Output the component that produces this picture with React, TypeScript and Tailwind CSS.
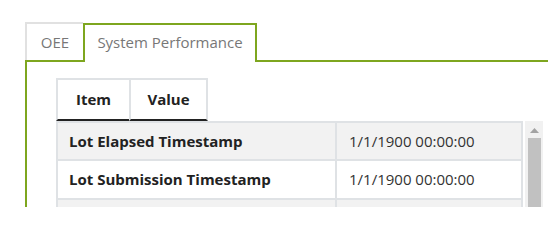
import React from "react";

const font = { fontFamily: '"Open Sans", "Noto Sans", sans-serif' };

export default function App() {
  return (
    <div className="w-[548px] h-[207px] overflow-hidden bg-white pt-[21px] pl-[25px]" style={font}>
      <div className="flex items-end h-[39px]">
        <div className="h-[38px] w-[58px] border-t-2 border-l-2 border-[#e1e1e1] flex items-center justify-center text-[15px] text-[#777777]">
          OEE
        </div>
        <div className="relative z-10 h-[39px] w-[174px] border-t-2 border-l-2 border-r-2 border-[#7ea61f] bg-white flex items-center justify-center text-[15px] text-[#777777] -mb-[2px] pb-[2px]">
          System Performance
        </div>
      </div>
      <div className="border-t-2 border-l-2 border-[#7ea61f] pl-[29px] pt-[16px] h-[200px]">
        <div className="flex">
          <div className="w-[73px] h-[43px] border-t-2 border-l-2 border-[#dfe2e5] border-b-2 border-b-[#222222] flex items-center justify-center font-bold text-[15px] text-[#222222]">
            Item
          </div>
          <div className="w-[79px] h-[43px] border-t-2 border-l-2 border-r-2 border-[#dfe2e5] border-b-2 border-b-[#222222] flex items-center justify-center font-bold text-[15px] text-[#222222]">
            Value
          </div>
        </div>
        <div className="flex w-[487px]">
          <div className="w-[467px] border-l-2 border-t-2 border-[#dfe2e5]">
            <div className="flex h-[38px] bg-[#f2f2f2] border-b-2 border-[#dfe2e5]">
              <div className="w-[279px] border-r-2 border-[#dfe2e5] flex items-center pl-[11px] font-bold text-[15px] text-[#222222]">
                Lot Elapsed Timestamp
              </div>
              <div className="flex-1 border-r-2 border-[#dfe2e5] flex items-center pl-[12px] text-[15px] text-[#333333]">
                1/1/1900 00:00:00
              </div>
            </div>
            <div className="flex h-[39px] bg-white border-b-2 border-[#dfe2e5]">
              <div className="w-[279px] border-r-2 border-[#dfe2e5] flex items-center pl-[11px] font-bold text-[15px] text-[#222222]">
                Lot Submission Timestamp
              </div>
              <div className="flex-1 border-r-2 border-[#dfe2e5] flex items-center pl-[12px] text-[15px] text-[#333333]">
                1/1/1900 00:00:00
              </div>
            </div>
            <div className="flex h-[39px] bg-[#f2f2f2]">
              <div className="w-[279px] border-r-2 border-[#dfe2e5]"></div>
              <div className="flex-1 border-r-2 border-[#dfe2e5]"></div>
            </div>
          </div>
          <div className="ml-[2px] w-[18px] bg-[#f1f1f1] flex flex-col items-center">
            <div className="h-[17px] flex items-center justify-center pt-[2px]">
              <svg width="9" height="5" viewBox="0 0 9 5">
                <polygon points="0,5 4.5,0 9,5" fill="#a3a3a3" />
              </svg>
            </div>
            <div className="w-[13px] flex-1 bg-[#c1c1c1] mt-0"></div>
          </div>
        </div>
      </div>
    </div>
  );
}
